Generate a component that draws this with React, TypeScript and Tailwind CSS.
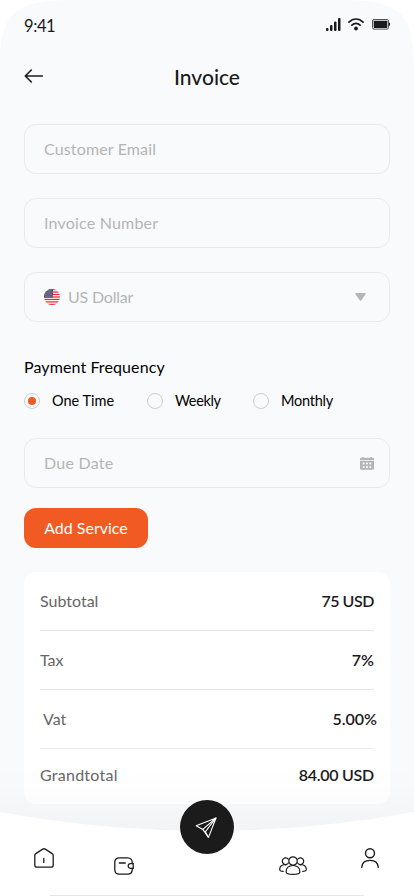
import type { ReactNode } from "react"

interface FieldProps {
    label: string
    labelClass?: string
    leading?: ReactNode
    trailing?: ReactNode
}

const totals = [
    { label: "Subtotal", value: "75 USD", row: "h-[58px]", labelClass: "", valueClass: "tracking-[-0.45px]" },
    { label: "Tax", value: "7%", row: "h-[59px] border-t", labelClass: "", valueClass: "" },
    { label: "Vat", value: "5.00%", row: "h-[59px] border-t", labelClass: "ml-[3px]", valueClass: "-mr-[3px]" },
    { label: "Grandtotal", value: "84.00 USD", row: "h-[53px] border-t", labelClass: "tracking-[0.25px]", valueClass: "tracking-[-0.25px]" },
]

const frequencies = [
    { label: "One Time", width: "w-[123px]", labelClass: "", checked: true },
    { label: "Weekly", width: "w-[106px]", labelClass: "tracking-[-0.35px]", checked: false },
    { label: "Monthly", width: "w-[90px]", labelClass: "tracking-[-0.25px]", checked: false },
]

function StatusBar() {
    return (
        <div className="flex h-[52px] items-center justify-between px-6 text-[#1b1b1b]">
            <span className="text-[16.5px] tracking-[-0.4px]">9:41</span>
            <div className="-mt-[3px] flex items-center gap-2">
                <svg width="15" height="13" viewBox="0 0 15 13" fill="#1b1b1b" className="-mr-px">
                    <rect x="0" y="10" width="2.5" height="3" rx="1" />
                    <rect x="4" y="7" width="2.5" height="6" rx="1" />
                    <rect x="8" y="3.6" width="2.5" height="9.4" rx="1" />
                    <rect x="12" y="0" width="2.5" height="13" rx="1" />
                </svg>
                <svg width="16" height="13" viewBox="0 0 16 13" fill="none" stroke="#1b1b1b" strokeWidth="1.7" strokeLinecap="round">
                    <path d="M1 4.2C5-.1 11-.1 15 4.2" />
                    <path d="M3.9 7.2c2.4-2.4 5.8-2.4 8.2 0" />
                    <circle cx="8" cy="10.5" r="1.9" fill="#1b1b1b" stroke="none" />
                </svg>
                <svg width="18" height="11" viewBox="0 0 18 11">
                    <rect x=".5" y=".5" width="16" height="9.6" rx="1.5" fill="none" stroke="#1b1b1b" strokeOpacity=".75" />
                    <rect x="1.7" y="1.7" width="13.6" height="7.2" rx=".6" fill="#1b1b1b" />
                    <path d="M17 3.5c.8.2 1 .8 1 1.8s-.2 1.6-1 1.8z" fill="#1b1b1b" />
                </svg>
            </div>
        </div>
    )
}

function Field({ label, labelClass = "", leading, trailing }: FieldProps) {
    return (
        <div className="flex h-[50px] w-full items-center rounded-[12px] border border-[#e8e9eb] pl-[19px] text-[16px] text-[#b5b5b5]">
            {leading}
            <span className={`flex-1 ${labelClass}`}>{label}</span>
            {trailing}
        </div>
    )
}

function UsFlag() {
    return (
        <svg width="16" height="16" viewBox="0 0 16 16" className="mr-2">
            <defs>
                <clipPath id="flag">
                    <circle cx="8" cy="8" r="8" />
                </clipPath>
            </defs>
            <g clipPath="url(#flag)">
                <rect width="16" height="16" fill="#fff" />
                {[0, 2.46, 4.92, 7.38, 9.84, 12.3, 14.76].map((y) => (
                    <rect key={y} y={y} width="16" height="1.23" fill="#e8262f" />
                ))}
                <rect width="9" height="8.6" fill="#3f426e" />
                {[1, 3, 5, 7].map((y) =>
                    [1, 3, 5, 7].map((x) => <circle key={`${x}-${y}`} cx={x + (y % 4 === 1 ? 0 : 1)} cy={y} r=".5" fill="#fff" />)
                )}
            </g>
        </svg>
    )
}

function CalendarIcon() {
    return (
        <svg width="14" height="13" viewBox="0 0 14 13" className="mr-[15px]">
            <path d="M1 .8h1V0h1.5v.8h7V0H12v.8h1a1 1 0 0 1 1 1v1.400H0V1.800a1 1 0 0 1 1-1z" fill="#b5b5b5" />
            <path d="M0 4h14v7.5a1.2 1.2 0 0 1-1.2 1.2H1.2A1.2 1.2 0 0 1 0 11.5z" fill="#b5b5b5" />
            {[5.6, 9.2].map((y) => [2.7, 6, 9.3].map((x) => <rect key={`${x}-${y}`} x={x} y={y} width="1.9" height="1.8" fill="#f9fafc" />))}
        </svg>
    )
}

function BottomNav() {
    return (
        <nav className="absolute inset-x-0 bottom-0 h-[96px]">
            <svg width="414" height="140" viewBox="0 -44 414 140" className="absolute bottom-0 left-0">
                <defs>
                    <linearGradient id="shade" x1="0" y1="0" x2="0" y2="1">
                        <stop offset="0" stopColor="#1b1b1b" stopOpacity="0" />
                        <stop offset=".4" stopColor="#1b1b1b" stopOpacity=".004" />
                        <stop offset="1" stopColor="#1b1b1b" stopOpacity=".03" />
                    </linearGradient>
                </defs>
                <path d="M0-44H414V12Q207 50 0 12z" fill="url(#shade)" />
                <path d="M0 12Q207 50 414 12V96H0z" fill="#fff" />
                <path d="M50 95.5H364" stroke="#e6e6e6" />
            </svg>
            <div className="relative flex h-full text-[#1b1b1b]">
                <svg width="20" height="20" viewBox="0 0 20 20" fill="none" stroke="currentColor" strokeWidth="1.3" strokeLinecap="round" className="ml-[34px] mt-12">
                    <path d="M.8 7.4c0-.8.3-1.3 1-1.8L8.7 1.1c.9-.5 1.700-.5 2.600 0l6.900 4.500c.7.5 1 1 1 1.800v9.600c0 1.500-.8 2.200-2.200 2.200H3c-1.400 0-2.200-.7-2.200-2.200z" />
                    <path d="M9.8 10.4v4" />
                </svg>
                <svg width="20" height="18" viewBox="0 0 20 18" fill="none" stroke="currentColor" strokeWidth="1.3" strokeLinecap="round" className="ml-[60px] mt-[57px]">
                    <path d="M18.3 6.2C18.3 2.5 16.6.8 13.5.8h-8C2.3.8.8 2.5.8 5.3v7.4c0 3 1.700 4.500 4.700 4.500h8c3.200 0 4.800-1.500 4.800-5.200" />
                    <path d="M16.5 6.7h2.700v4.600h-2.700a2.300 2.300 0 0 1 0-4.600zM5.300 6h6" />
                </svg>
                <button className="ml-[46px] flex h-[54px] w-[54px] items-center justify-center rounded-full bg-[#1b1b1b]">
                    <svg width="22" height="22" viewBox="0 0 22 22" fill="none" stroke="#fff" strokeWidth="1.1" strokeLinejoin="round" className="-ml-[3px] mt-0.5">
                        <path d="M21 1L1.2 8.800L7.800 12.400z" />
                        <path d="M21 1L13.500 20.400L10.300 14.800z" />
                        <path d="M7.800 12.400L13.500 20.400" />
                    </svg>
                </button>
                <svg width="28" height="19" viewBox="0 0 28 19" fill="none" stroke="currentColor" strokeWidth="1.2" strokeLinecap="round" className="ml-[45px] mt-14">
                    <circle cx="14" cy="5" r="4.2" />
                    <path d="M14 9.5c-4.400 0-6.900 2.300-6.900 6.500 0 1.600 2.900 2.400 6.900 2.400s6.900-.8 6.900-2.400c0-4.200-2.500-6.500-6.900-6.500z" />
                    <path d="M9.2 3.2A3.3 3.3 0 1 0 9.4 7M18.8 3.2A3.3 3.3 0 1 1 18.6 7" />
                    <path d="M7 8.9C2.900 8.100.7 10.400.7 13.200c0 1.400 1.600 2.100 3.600 2.100M21 8.900c4.100-.8 6.300 1.500 6.300 4.300 0 1.400-1.600 2.100-3.600 2.100" />
                </svg>
                <svg width="18" height="20" viewBox="0 0 18 20" fill="none" stroke="currentColor" strokeWidth="1.4" strokeLinecap="round" className="ml-[54px] mt-12">
                    <circle cx="9" cy="5.3" r="4.5" />
                    <path d="M.8 19.200c.3-4.400 3.300-6.800 8.200-6.800s7.900 2.400 8.200 6.800" />
                </svg>
            </div>
        </nav>
    )
}

export default function App() {
    return (
        <div className="relative h-[896px] w-[414px] overflow-hidden bg-[#f9fafc] font-['Lato',sans-serif]">
            {/* Screen corners */}
            <svg width="414" height="70" viewBox="0 0 414 70" fill="#fff" className="absolute left-0 top-0">
                <path d="M0 0H72C14 0 0 14 0 66z" />
                <path d="M414 0H342C400 0 414 14 414 66z" />
            </svg>

            <div className="relative">
                <StatusBar />

                {/* Header */}
                <header className="relative flex h-12 items-center justify-center text-[#1b1b1b]">
                    <svg width="19" height="14" viewBox="0 0 19 14" fill="none" stroke="currentColor" strokeWidth="1.6" strokeLinecap="round" strokeLinejoin="round" className="absolute left-6 top-[17px]">
                        <path d="M7.3 1l-6 6 6 6M1.300 7h17" />
                    </svg>
                    <h1 className="pt-px text-[21px] font-medium">Invoice</h1>
                </header>

                <main className="px-6 pt-6">
                    <div className="flex flex-col gap-6">
                        <Field label="Customer Email" labelClass="tracking-[0.14px]" />
                        <Field label="Invoice Number" labelClass="tracking-[0.2px]" />
                        <Field
                            label="US Dollar"
                            labelClass="tracking-[-0.2px]"
                            leading={<UsFlag />}
                            trailing={
                                <svg width="11" height="8" viewBox="0 0 12 8" preserveAspectRatio="none" fill="#b5b5b5" className="mr-[23px]">
                                    <path d="M1 0h10c.8 0 1 .6.5 1.200L6.900 7.300c-.5.7-1.300.7-1.800 0L.5 1.200C0 .6.200 0 1 0z" />
                                </svg>
                            }
                        />
                    </div>

                    <h2 className="mt-[33px] text-[16px] leading-6 tracking-[0.1px] text-black">Payment Frequency</h2>
                    <div className="mt-[14px] flex h-4 items-center text-[14.5px] text-black">
                        {frequencies.map((f) => (
                            <div key={f.label} className={`flex items-center gap-3 ${f.width}`}>
                                <span className="flex h-4 w-4 items-center justify-center rounded-full border border-[#ccc]">
                                    {f.checked && <span className="h-2 w-2 rounded-full bg-[#f15a22]" />}
                                </span>
                                <span className={f.labelClass}>{f.label}</span>
                            </div>
                        ))}
                    </div>

                    <div className="mt-[29px]">
                        <Field label="Due Date" labelClass="tracking-[0.25px]" trailing={<CalendarIcon />} />
                    </div>
                    <button className="mt-5 flex h-10 w-[124px] items-center justify-center rounded-[12px] bg-[#f15a22] text-[16px] text-white">
                        Add Service
                    </button>

                    {/* Totals */}
                    <div className="mt-6 h-[232px] rounded-[12px] bg-white px-4 text-[16px]">
                        {totals.map((t) => (
                            <div key={t.label} className={`flex items-center justify-between border-[#e8e8e8] ${t.row}`}>
                                <span className={`text-[#666] ${t.labelClass}`}>{t.label}</span>
                                <span className={`font-semibold text-[#1b1b1b] ${t.valueClass}`}>{t.value}</span>
                            </div>
                        ))}
                    </div>
                </main>
            </div>

            <BottomNav />
        </div>
    )
}
